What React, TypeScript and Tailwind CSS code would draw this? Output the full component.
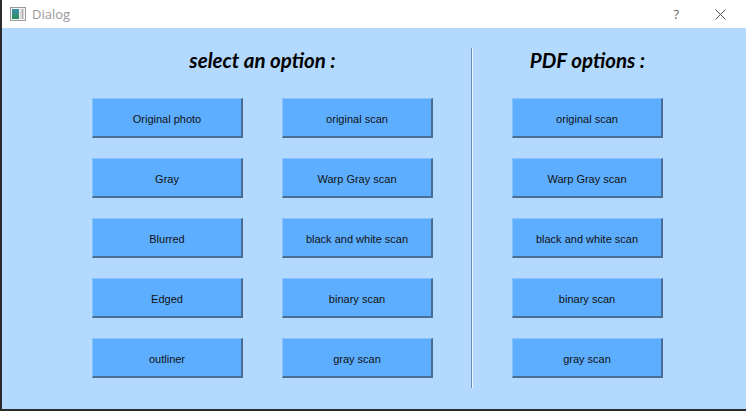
import React from "react";

const btn =
  "w-[151px] h-[40px] pt-[4px] bg-[#5eaeff] border-t border-l border-t-[#86c2ff] border-l-[#86c2ff] border-b-2 border-r-2 border-b-[#4a6e93] border-r-[#4a6e93] flex items-center justify-center text-[11px] text-[#111] font-['Liberation_Sans',sans-serif]";

function Btn({ label }: { label: string }) {
  return <div className={btn}>{label}</div>;
}

function Col({ items }: { items: string[] }) {
  return (
    <div className="flex flex-col gap-[20px]">
      {items.map((t) => (
        <Btn key={t} label={t} />
      ))}
    </div>
  );
}

export default function App() {
  const scans = [
    "original scan",
    "Warp Gray scan",
    "black and white scan",
    "binary scan",
    "gray scan",
  ];
  return (
    <div className="w-[746px] h-[411px] bg-[#2b2b2b] flex flex-col pl-[2px] pb-[2px] overflow-hidden">
      {/* title bar */}
      <div className="h-[28px] bg-white flex items-center pl-[8px] pr-[20px] shrink-0">
        <svg width="16" height="14" viewBox="0 0 16 14" className="shrink-0">
          <defs>
            <linearGradient id="g" x1="0" y1="0" x2="0" y2="1">
              <stop offset="0" stopColor="#3a8fb0" />
              <stop offset="1" stopColor="#2f8a55" />
            </linearGradient>
          </defs>
          <rect x="0.5" y="0.5" width="15" height="13" fill="#f4f4f4" stroke="#9a9a9a" />
          <rect x="2" y="2" width="7" height="10" fill="url(#g)" />
          <rect x="10" y="2" width="4" height="10" fill="#d8d8d8" />
          <rect x="12" y="2" width="1" height="10" fill="#b0b0b0" />
        </svg>
        <span className="ml-[6px] text-[13px] text-[#999] font-['Open_Sans',sans-serif] leading-none">
          Dialog
        </span>
        <div className="flex-1" />
        <span className="text-[13px] text-[#666] font-['Open_Sans',sans-serif] leading-none mr-[36px]">
          ?
        </span>
        <svg width="11" height="11" viewBox="0 0 11 11">
          <path d="M0.5 0.5L10.5 10.5M10.5 0.5L0.5 10.5" stroke="#555" strokeWidth="1" />
        </svg>
      </div>
      {/* content */}
      <div className="flex-1 bg-[#b3d9ff] flex items-start pt-[20px] pl-[90px]">
        <div className="flex flex-col">
          <div className="h-[50px] text-center font-['Lato',sans-serif] italic font-bold text-[20.5px] leading-[24px] text-black">
            select an option :
          </div>
          <div className="flex gap-[39px]">
            <Col items={["Original photo", "Gray", "Blurred", "Edged", "outliner"]} />
            <Col items={scans} />
          </div>
        </div>
        <div className="ml-[38px] h-[340px] flex">
          <div className="w-px h-full bg-[#6d8db0]" />
          <div className="w-px h-full bg-[#eaf5ff]" />
        </div>
        <div className="ml-[39px] flex flex-col">
          <div className="h-[50px] text-center font-['Lato',sans-serif] italic font-bold text-[20.5px] leading-[24px] text-black">
            PDF options :
          </div>
          <Col items={scans} />
        </div>
      </div>
    </div>
  );
}
